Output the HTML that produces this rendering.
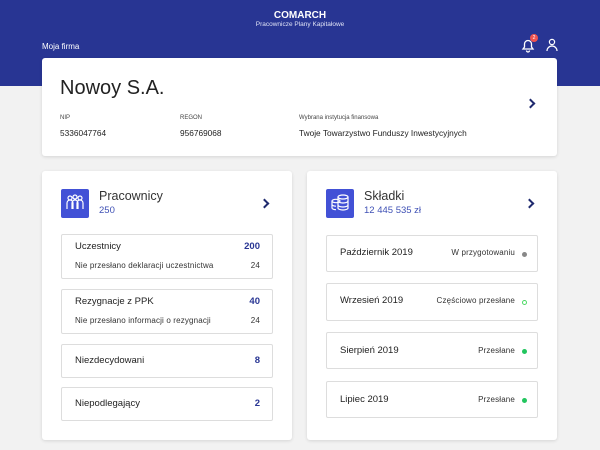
<!DOCTYPE html>
<html><head><meta charset="utf-8"><style>
*{box-sizing:border-box;margin:0;padding:0}
body{width:600px;height:450px;background:#f2f2f2;font-family:"Liberation Sans",sans-serif;position:relative;overflow:hidden;color:#222}
.hdr{position:absolute;left:0;top:0;width:600px;height:86px;background:#283593}
.abs{position:absolute}
.card{position:absolute;background:#fff;border-radius:3px;box-shadow:0 1px 3px rgba(0,0,0,.12)}
.box{position:absolute;border:1px solid #ddd;border-radius:2px;background:#fff}
.t{position:absolute;white-space:nowrap}
.r{position:absolute;white-space:nowrap;text-align:right}
.chev{position:absolute;width:7px;height:7px;border-right:2px solid #1f2a6e;border-top:2px solid #1f2a6e;transform:rotate(45deg)}
.icon{position:absolute;width:28px;height:29px;background:#4251d6;border-radius:2px}
.dot{position:absolute;width:5px;height:5px;border-radius:50%}
.s{font-size:8px;color:#333;letter-spacing:.15px}
.m{font-size:9.5px}
</style></head><body>
<div class="hdr"></div>
<div class="t" style="left:0;width:600px;text-align:center;top:10px;color:#fff;font-weight:bold;font-size:10px">COMARCH</div>
<div class="t" style="left:0;width:600px;text-align:center;top:21px;color:#dfe2f5;font-size:6.5px">Pracownicze Plany Kapitałowe</div>
<div class="t" style="left:42px;top:42px;color:#fff;font-size:8px">Moja firma</div>
<svg class="abs" style="left:520px;top:37px" width="16" height="16" viewBox="0 0 16 16"><path d="M3 12h10l-1.5-2V7a3.5 3.5 0 0 0-7 0v3z M6.5 13.5a1.5 1.5 0 0 0 3 0" fill="none" stroke="#fff" stroke-width="1.3"/></svg>
<div class="abs" style="left:530px;top:34px;width:8px;height:8px;border-radius:50%;background:#ef5350;color:#fff;font-size:5px;text-align:center;line-height:8px">2</div>
<svg class="abs" style="left:545px;top:38px" width="14" height="14" viewBox="0 0 14 14"><circle cx="7" cy="4" r="2.6" fill="none" stroke="#fff" stroke-width="1.2"/><path d="M2 13a5 5 0 0 1 10 0" fill="none" stroke="#fff" stroke-width="1.2"/></svg>

<div class="card" style="left:42px;top:58px;width:515px;height:98px"></div>
<div class="t" style="left:60px;top:77px;font-size:20px;color:#222">Nowoy S.A.</div>
<div class="t" style="left:60px;top:115px;font-size:6px;color:#444">NIP</div>
<div class="t" style="left:60px;top:128px;font-size:8.3px">5336047764</div>
<div class="t" style="left:180px;top:115px;font-size:6px;color:#444">REGON</div>
<div class="t" style="left:180px;top:128px;font-size:8.3px">956769068</div>
<div class="t" style="left:299px;top:115px;font-size:6px;color:#444">Wybrana instytucja finansowa</div>
<div class="t" style="left:299px;top:128px;font-size:8.3px">Twoje Towarzystwo Funduszy Inwestycyjnych</div>
<div class="chev" style="left:527px;top:100px"></div>

<div class="card" style="left:42px;top:171px;width:250px;height:269px"></div>
<div class="icon" style="left:61px;top:189px"></div>
<svg class="abs" style="left:61px;top:189px" width="28" height="29" viewBox="0 0 28 29"><g fill="none" stroke="#fff" stroke-width="1.2"><circle cx="9" cy="9" r="2"/><circle cx="14" cy="8" r="2"/><circle cx="19" cy="9" r="2"/><path d="M6 20v-6a3 3 0 0 1 6 0v6M11 20v-6a3 3 0 0 1 6 0v6M16 20v-6a3 3 0 0 1 6 0v6"/></g></svg>
<div class="t" style="left:99px;top:189px;font-size:12.5px;color:#333">Pracownicy</div>
<div class="t" style="left:99px;top:205px;font-size:9.5px;color:#3f51b5">250</div>
<div class="chev" style="left:261px;top:200px"></div>

<div class="box" style="left:61px;top:234px;width:212px;height:45px"></div>
<div class="t m" style="left:75px;top:241px">Uczestnicy</div>
<div class="r m" style="right:340px;top:241px;color:#283593;font-weight:bold">200</div>
<div class="t s" style="left:75px;top:261px">Nie przesłano deklaracji uczestnictwa</div>
<div class="r s" style="right:340px;top:261px">24</div>
<div class="box" style="left:61px;top:289px;width:212px;height:45px"></div>
<div class="t m" style="left:75px;top:296px">Rezygnacje z PPK</div>
<div class="r m" style="right:340px;top:296px;color:#283593;font-weight:bold">40</div>
<div class="t s" style="left:75px;top:316px">Nie przesłano informacji o rezygnacji</div>
<div class="r s" style="right:340px;top:316px">24</div>
<div class="box" style="left:61px;top:344px;width:212px;height:34px"></div>
<div class="t m" style="left:75px;top:355px">Niezdecydowani</div>
<div class="r m" style="right:340px;top:355px;color:#283593;font-weight:bold">8</div>
<div class="box" style="left:61px;top:387px;width:212px;height:34px"></div>
<div class="t m" style="left:75px;top:398px">Niepodlegający</div>
<div class="r m" style="right:340px;top:398px;color:#283593;font-weight:bold">2</div>

<div class="card" style="left:307px;top:171px;width:250px;height:269px"></div>
<div class="icon" style="left:326px;top:189px"></div>
<svg class="abs" style="left:326px;top:189px" width="28" height="29" viewBox="0 0 28 29"><g fill="none" stroke="#fff" stroke-width="1.2"><ellipse cx="17" cy="8" rx="5" ry="2"/><path d="M12 8v11c0 1 2 2 5 2s5-1 5-2V8M12 12c0 1 2 2 5 2s5-1 5-2M12 16c0 1 2 2 5 2s5-1 5-2"/><ellipse cx="10" cy="12" rx="4" ry="1.7"/><path d="M6 12v7c0 1 2 1.7 4 1.7M6 15.5c0 1 2 1.7 4 1.7"/></g></svg>
<div class="t" style="left:364px;top:189px;font-size:12.5px;color:#333">Składki</div>
<div class="t" style="left:364px;top:205px;font-size:9.5px;color:#3f51b5">12 445 535 zł</div>
<div class="chev" style="left:526px;top:200px"></div>

<div class="box" style="left:326px;top:235px;width:212px;height:37px"></div>
<div class="t m" style="left:340px;top:247px">Październik 2019</div>
<div class="r s" style="right:85px;top:248px">W przygotowaniu</div>
<div class="dot" style="left:522px;top:252px;background:#888"></div>
<div class="box" style="left:326px;top:283px;width:212px;height:38px"></div>
<div class="t m" style="left:340px;top:295px">Wrzesień 2019</div>
<div class="r s" style="right:85px;top:296px">Częściowo przesłane</div>
<div class="dot" style="left:522px;top:300px;border:1px solid #4cd964"></div>
<div class="box" style="left:326px;top:332px;width:212px;height:37px"></div>
<div class="t m" style="left:340px;top:345px">Sierpień 2019</div>
<div class="r s" style="right:85px;top:346px">Przesłane</div>
<div class="dot" style="left:522px;top:349px;background:#22c55e"></div>
<div class="box" style="left:326px;top:381px;width:212px;height:37px"></div>
<div class="t m" style="left:340px;top:394px">Lipiec 2019</div>
<div class="r s" style="right:85px;top:395px">Przesłane</div>
<div class="dot" style="left:522px;top:398px;background:#22c55e"></div>
</body></html>
